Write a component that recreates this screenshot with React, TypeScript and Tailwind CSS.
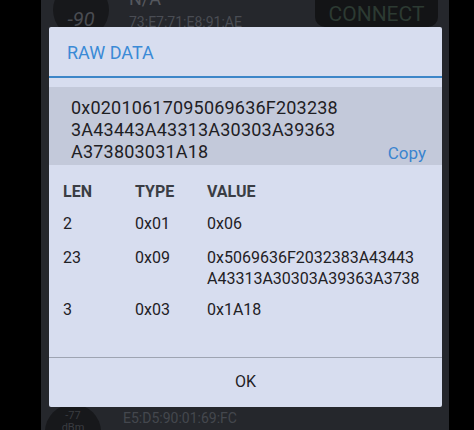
import React from "react";

const font = { fontFamily: "Roboto, 'Noto Sans', sans-serif" };

export default function App() {
  return (
    <div className="w-[474px] h-[430px] bg-black overflow-hidden relative" style={font}>
      {/* phone screen */}
      <div className="absolute left-[41px] top-0 w-[408px] h-[430px] bg-[#25272c] overflow-hidden">
        {/* top list row */}
        <div className="flex items-start h-[40px]">
          <div className="ml-[12px] -mt-[18px] w-[56px] h-[56px] rounded-full bg-[#17181b] flex items-center justify-center">
            <span className="text-[#4a4c52] text-[20px] italic mt-[18px]">-90</span>
          </div>
          <div className="ml-[20px] flex flex-col -mt-[12px]">
            <span className="text-[#55585e] text-[18px] leading-[22px]">N/A</span>
            <span className="text-[#4a4d54] text-[14px] leading-[20px] mt-[2px]">73:E7:71:E8:91:AE</span>
          </div>
          <div className="ml-auto mr-[11px] w-[123px] h-[27px] rounded-b-[10px] bg-[#131416] flex items-end justify-center">
            <span className="text-[#2c3a32] text-[21px] leading-[26px]">CONNECT</span>
          </div>
        </div>
        {/* bottom list row */}
        <div className="absolute left-[4px] top-[404px] flex items-start">
          <div className="w-[56px] h-[56px] rounded-full bg-[#17181b] flex flex-col items-center pt-[6px]">
            <span className="text-[#3a3c41] text-[11px] leading-[12px]">-77</span>
            <span className="text-[#3a3c41] text-[11px] leading-[12px]">dBm</span>
          </div>
          <span className="ml-[22px] mt-[4px] text-[#44474e] text-[14px] leading-[20px]">E5:D5:90:01:69:FC</span>
        </div>
      </div>

      {/* dialog */}
      <div className="absolute left-[49px] top-[27px] w-[393px] h-[380px] bg-[#d7ddef] rounded-[2px] flex flex-col">
        <div className="h-[49px] flex items-center pl-[18px]">
          <span className="text-[#3a8ad6] text-[18px] leading-[24px] mt-[2px]">RAW DATA</span>
        </div>
        <div className="h-[2px] bg-[#3d86c8]" />
        <div className="h-[9px]" />
        <div className="bg-[#c3c9da] h-[78px] flex items-start pl-[22px] pr-[16px] pt-[10px]">
          <div className="text-[#1e2024] text-[18px] leading-[22px] tracking-[0.2px]">
            <div>0x02010617095069636F203238</div>
            <div>3A43443A43313A30303A39363</div>
            <div>A373803031A18</div>
          </div>
          <span className="ml-auto mt-[45px] text-[#3a84cf] text-[17px] leading-[22px]">Copy</span>
        </div>
        <div className="pl-[14px] pt-[16px] text-[#1f2125] text-[16px]">
          <div className="grid grid-cols-[72px_72px_1fr] font-bold text-[#3a3d44] leading-[22px]">
            <span>LEN</span>
            <span>TYPE</span>
            <span>VALUE</span>
          </div>
          <div className="grid grid-cols-[72px_72px_1fr] leading-[21px] mt-[10px]">
            <span>2</span>
            <span>0x01</span>
            <span>0x06</span>
          </div>
          <div className="grid grid-cols-[72px_72px_1fr] leading-[21px] mt-[13px]">
            <span>23</span>
            <span>0x09</span>
            <span>
              0x5069636F2032383A43443
              <br />
              A43313A30303A39363A3738
            </span>
          </div>
          <div className="grid grid-cols-[72px_72px_1fr] leading-[21px] mt-[10px]">
            <span>3</span>
            <span>0x03</span>
            <span>0x1A18</span>
          </div>
        </div>
        <div className="mt-auto h-[1px] bg-[#9ea4b2]" />
        <div className="h-[49px] flex items-center justify-center">
          <span className="text-[#1f2125] text-[16px] mb-[2px]">OK</span>
        </div>
      </div>
    </div>
  );
}
